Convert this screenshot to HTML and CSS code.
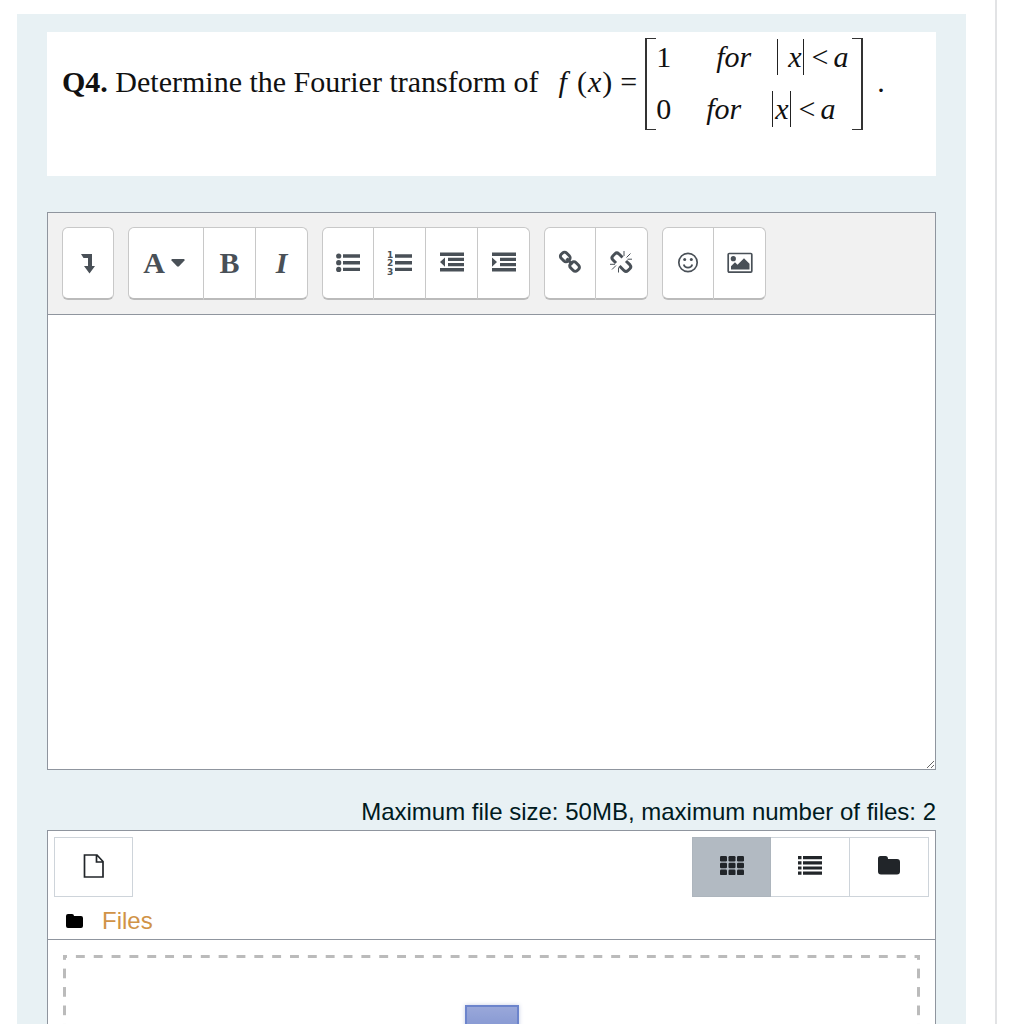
FILE: index.html
```
<!DOCTYPE html>
<html lang="en">
<head>
    <meta charset="UTF-8">
    <meta name="viewport" content="width=device-width, initial-scale=1.0">
    <title>Question 4</title>
    <link rel="stylesheet" href="styles.css">
</head>
<body>
    <main class="page">
        <div class="formulation">
            <div class="question">
                <p class="question-text"><b>Q4.</b> Determine the Fourier transform of</p>
                <div class="formula">
                    <span class="func"><i class="name">f</i>(<i class="arg">x</i>)</span>
                    <span class="equals">=</span>
                    <div class="matrix">
                        <div class="matrix-row">
                            <span class="value">1</span>
                            <i class="for">for</i>
                            <i class="abs abs-wide">x</i>
                            <span class="less">&lt;</span>
                            <i>a</i>
                        </div>
                        <div class="matrix-row matrix-row-second">
                            <span class="value">0</span>
                            <i class="for">for</i>
                            <i class="abs">x</i>
                            <span class="less">&lt;</span>
                            <i>a</i>
                        </div>
                    </div>
                    <span class="period">.</span>
                </div>
            </div>

            <div class="editor">
                <div class="toolbar" role="toolbar" aria-label="Editor">
                    <div class="group">
                        <button type="button" class="tool" aria-label="Show more buttons">
                            <svg class="icon" viewBox="0 0 26 26"><path d="M6 4h11v12h3l-5.500 7.500L9 16h4V8H8.500z"/></svg>
                        </button>
                    </div>
                    <div class="group">
                        <button type="button" class="tool tool-style" aria-label="Paragraph styles">A<svg class="caret" viewBox="0 0 14 8"><path d="M1 0h12q1 .5.500 1.500L8 7.300q-1 .9-2 0L.5 1.500Q0 .5 1 0z"/></svg></button>
                        <button type="button" class="tool" aria-label="Bold">B</button>
                        <button type="button" class="tool tool-italic" aria-label="Italic">I</button>
                    </div>
                    <div class="group">
                        <button type="button" class="tool" aria-label="Unordered list">
                            <svg class="icon" viewBox="0 0 26 26"><circle cx="3.700" cy="6" r="2.600"/><circle cx="3.700" cy="12.700" r="2.600"/><circle cx="3.700" cy="19.400" r="2.600"/><path d="M8 4.300h17v3.400H8zM8 11h17v3.400H8zM8 17.700h17v3.400H8z"/></svg>
                        </button>
                        <button type="button" class="tool" aria-label="Ordered list">
                            <svg class="icon" viewBox="0 0 26 26"><text x="0" y="7.500">1</text><text x="0" y="16">2</text><text x="0" y="24.500">3</text><path d="M8 4.300h17v3.400H8zM8 11h17v3.400H8zM8 17.700h17v3.400H8z"/></svg>
                        </button>
                        <button type="button" class="tool" aria-label="Outdent">
                            <svg class="icon" viewBox="0 0 26 26"><path d="M1 2.500h24V6H1zM9 7.700h16v3.300H9zM9 12.900h16v3.300H9zM1 17.900h24v3.500H1zM1 12.100l5-4.600v9.300z"/></svg>
                        </button>
                        <button type="button" class="tool" aria-label="Indent">
                            <svg class="icon" viewBox="0 0 26 26"><path d="M1 2.500h24V6H1zM9 7.700h16v3.300H9zM9 12.900h16v3.300H9zM1 17.900h24v3.500H1zM6 12.100L1 7.500v9.300z"/></svg>
                        </button>
                    </div>
                    <div class="group">
                        <button type="button" class="tool" aria-label="Link">
                            <svg class="icon line" viewBox="0 0 26 26"><rect x="3.500" y="3.200" width="9.500" height="7.500" rx="2.800" transform="rotate(45 8.200 7)"/><rect x="12.800" y="12.700" width="9.500" height="7.500" rx="2.800" transform="rotate(45 17.500 16.500)"/><path d="M9.500 8.500l6 6"/></svg>
                        </button>
                        <button type="button" class="tool" aria-label="Unlink">
                            <svg class="icon line" viewBox="0 0 26 26"><path d="M7 13L3.800 9.800Q2 7.800 3.800 6L6 3.800Q7.800 2 9.800 3.800L13.500 7.500M10.500 16l4.700 4.700q1.800 1.600 3.600 0l2.200-2.200q1.600-1.800 0-3.600L17 11"/><path class="thin" d="M15 6V1M17.500 7.500l4-4M18.500 9.200H23M7 15.500l-4 4M6 14.300H1M9.500 17.500v5"/></svg>
                        </button>
                    </div>
                    <div class="group">
                        <button type="button" class="tool" aria-label="Emoji picker">
                            <svg class="icon" viewBox="0 0 26 26"><circle class="outline" cx="13" cy="12.500" r="9.200"/><circle cx="9.700" cy="9.500" r="1.500"/><circle cx="16.300" cy="9.500" r="1.500"/><path class="outline" d="M8.700 14.500q1 3.200 4.300 3.200t4.300-3.200"/></svg>
                        </button>
                        <button type="button" class="tool" aria-label="Image">
                            <svg class="icon" viewBox="0 0 26 26"><rect class="outline" x="1.200" y="3.500" width="23.600" height="18.600" rx="1"/><circle cx="6.300" cy="8.700" r="2.600"/><path d="M4 19.500v-3.200l4-4 2.500 2.500L17 8.300l5.500 5.500v5.700z"/></svg>
                        </button>
                    </div>
                </div>
                <textarea class="answer" aria-label="Answer text"></textarea>
            </div>

            <p class="restrictions">Maximum file size: 50MB, maximum number of files: 2</p>

            <div class="filemanager">
                <div class="fm-toolbar">
                    <button type="button" class="fm-button" aria-label="Add file">
                        <svg class="icon" viewBox="0 0 26 26"><path class="outline" d="M3.500 2h12.500l6 6.500V24H3.500zM15.500 2v7H22"/></svg>
                    </button>
                    <div class="fm-views">
                        <button type="button" class="fm-button active" aria-label="Display folder with file icons">
                            <svg class="icon" viewBox="0 0 26 26"><g id="dots"><rect x="1" y="3" width="7" height="5.500" rx="1.200"/><rect x="9.500" y="3" width="7" height="5.500" rx="1.200"/><rect x="18" y="3" width="7" height="5.500" rx="1.200"/></g><use href="#dots" y="6.800"/><use href="#dots" y="13.600"/></svg>
                        </button>
                        <button type="button" class="fm-button" aria-label="Display folder with file details">
                            <svg class="icon" viewBox="0 0 26 26"><path d="M1 3h3.500v3.200H1zM6 3h19v3.200H6zM1 8.200h3.500v3.200H1zM6 8.200h19v3.200H6zM1 13.400h3.500v3.200H1zM6 13.400h19v3.200H6zM1 18.600h3.500v3.200H1zM6 18.600h19v3.200H6z"/></svg>
                        </button>
                        <button type="button" class="fm-button" aria-label="Display folder as file tree">
                            <svg class="icon" viewBox="0 0 26 26"><path d="M2 5.500Q2 3 4.500 3h5Q12 3 12 6h9q3 0 3 3v9.500q0 3-3 3H5q-3 0-3-3z"/></svg>
                        </button>
                    </div>
                </div>
                <div class="fm-path">
                    <svg class="folder" viewBox="0 0 18 16"><path d="M0 3Q0 1 2 1h4q2 0 2 2h7q2 0 2 2v8q0 2-2 2H2q-2 0-2-2z"/></svg>
                    <a href="#">Files</a>
                </div>
                <div class="fm-content">
                    <div class="dropzone">
                        <svg class="drop-arrow" viewBox="0 0 100 100">
                            <defs>
                                <linearGradient id="arrow" x1="0" y1="0" x2="0" y2="1">
                                    <stop offset="0" stop-color="#9aa8da"/>
                                    <stop offset="1" stop-color="#4263b8"/>
                                </linearGradient>
                            </defs>
                            <path d="M24 2h52v46h22L50 98 2 48h22z"/>
                        </svg>
                    </div>
                </div>
            </div>
        </div>
    </main>
</body>
</html>
```
FILE: styles.css
```
:root {
    --panel: #e8f1f4;
    --border: #8f959e;
    --button-border: #ced4da;
    --icon: #495057;
    --dash: #bbbbbb;
    --link: #d09347;
    --serif: "Liberation Serif", "Times New Roman", serif;
    --sans: "Liberation Sans", Arial, sans-serif;
}

* {
    margin: 0;
    padding: 0;
    box-sizing: border-box;
}

body {
    font-family: var(--sans);
    font-size: 24px;
    line-height: 36px;
    color: #001a1e;
    background: #fff;
}

button {
    font: inherit;
    cursor: pointer;
}

.page {
    min-height: 100vh;
    margin-right: 22px;
    padding: 14px 29px 0 17px;
    border-right: 2px solid #e2e3e5;
}

.formulation {
    padding: 18px 30px 30px;
    background: var(--panel);
}

/* Question */
.question {
    display: flex;
    align-items: flex-start;
    min-height: 144px;
    padding: 6px 15px;
    background: #fff;
    color: #111;
    font-family: var(--serif);
    font-size: 30px;
    line-height: 32px;
    white-space: nowrap;
}

.question-text {
    padding-top: 28px;
}

.formula {
    display: flex;
    align-items: flex-start;
    margin-left: 20px;
}

.func {
    padding-top: 28px;
}

.name {
    padding-right: 10px;
}

.arg {
    padding: 0 1px;
}

.equals {
    padding: 28px 8px 0;
}

.matrix {
    position: relative;
    width: 218px;
    height: 92px;
    padding: 1px 9px;
    border: solid #333;
    border-width: 0 2px;
}

/* Bracket serifs */
.matrix::before,
.matrix::after {
    content: "";
    position: absolute;
    top: 0;
    bottom: 0;
    width: 9px;
    border: solid #333;
    border-width: 1px 0;
}

.matrix::before {
    left: 0;
}

.matrix::after {
    right: 0;
}

.matrix-row {
    display: flex;
    align-items: center;
    height: 36px;
    margin-bottom: 16px;
}

.value {
    width: 60px;
}

.matrix-row-second .value {
    width: 50px;
}

.for {
    width: 61px;
}

.matrix-row-second .for {
    width: 66px;
}

.abs {
    height: 36px;
    padding: 2px;
    border: solid #222;
    border-width: 0 1px;
}

.abs-wide {
    padding-left: 10px;
}

.less {
    margin: 0 5px 0 7px;
}

.period {
    padding: 28px 0 0 14px;
}

/* Editor */
.editor {
    margin-top: 36px;
    border: 1px solid var(--border);
    background: #fff;
}

.toolbar {
    display: flex;
    flex-wrap: wrap;
    gap: 14px;
    padding: 14px;
    border-bottom: 1px solid var(--border);
    background: #f1f1f1;
}

.group {
    display: flex;
}

.tool {
    display: flex;
    align-items: center;
    justify-content: center;
    width: 52px;
    height: 73px;
    border: 1px solid #c8c8c8;
    border-left-width: 0;
    border-bottom: 2px solid #bbb;
    background: #fff;
    color: var(--icon);
    font-family: var(--serif);
    font-size: 30px;
    font-weight: bold;
}

.tool:first-child {
    border-left-width: 1px;
    border-radius: 6px 0 0 6px;
}

.tool:last-child {
    border-radius: 0 6px 6px 0;
}

.tool:only-child {
    border-radius: 6px;
}

.tool:hover {
    background: #f5f5f5;
}

.tool-style {
    gap: 6px;
    width: 76px;
    padding-right: 4px;
}

.tool-italic {
    font-style: italic;
}

.icon {
    width: 26px;
    height: 26px;
    fill: currentColor;
}

.icon text {
    font: bold 9px "DejaVu Sans", sans-serif;
}

.icon .outline {
    fill: none;
    stroke: currentColor;
    stroke-width: 1.7;
}

.line {
    fill: none;
    stroke: currentColor;
    stroke-width: 3;
}

.line .thin {
    stroke-width: 1;
}

.caret {
    width: 14px;
    height: 8px;
    fill: currentColor;
}

.answer {
    display: block;
    width: 100%;
    height: 454px;
    padding: 12px;
    border: 0;
    outline: none;
    background: #fff;
    font: inherit;
    resize: vertical;
}

/* File manager */
.restrictions {
    margin-top: 24px;
    text-align: right;
}

.filemanager {
    border: 1px solid var(--border);
    background: #fff;
}

.fm-toolbar {
    display: flex;
    justify-content: space-between;
    padding: 6px;
}

.fm-views {
    display: flex;
}

.fm-button {
    display: flex;
    align-items: center;
    justify-content: center;
    width: 79px;
    height: 60px;
    padding-bottom: 2px;
    border: 1px solid var(--button-border);
    background: #fff;
    color: #212529;
}

.fm-button + .fm-button {
    border-left-width: 0;
}

.fm-button.active {
    border-color: #adb5bd;
    background: #b2bac2;
}

.fm-path {
    display: flex;
    align-items: center;
    gap: 18px;
    padding: 0 18px;
    border-bottom: 1px solid var(--border);
}

.folder {
    width: 18px;
    height: 16px;
    fill: #000;
}

.fm-path a {
    color: var(--link);
    text-decoration: none;
}

.fm-path a:hover {
    text-decoration: underline;
}

.fm-content {
    padding: 15px;
}

.dropzone {
    min-height: 240px;
    padding-top: 49px;
    text-align: center;
    background-image:
        linear-gradient(90deg, var(--dash) 25%, transparent 25% 75%, var(--dash) 75%),
        linear-gradient(90deg, var(--dash) 25%, transparent 25% 75%, var(--dash) 75%),
        linear-gradient(var(--dash) 25%, transparent 25% 75%, var(--dash) 75%),
        linear-gradient(var(--dash) 25%, transparent 25% 75%, var(--dash) 75%);
    background-position: top left, bottom left, top left, top right;
    background-repeat: round no-repeat, round no-repeat, no-repeat round, no-repeat round;
    background-size: 18px 3px, 18px 3px, 3px 18px, 3px 18px;
}

.drop-arrow {
    width: 100px;
    height: 100px;
    fill: url(#arrow);
    stroke: #6c84cc;
    stroke-width: 2;
    filter: drop-shadow(0 0 2px #c5cce4);
}
```
